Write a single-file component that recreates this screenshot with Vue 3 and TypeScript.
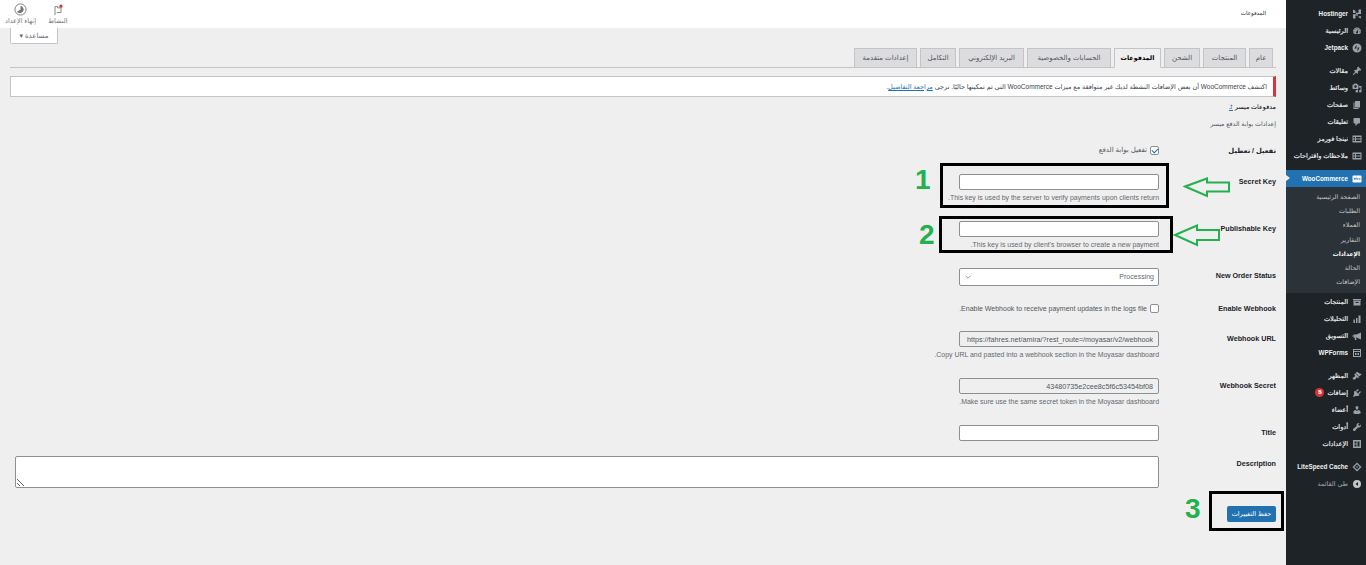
<script setup lang="ts">
interface MenuItem {
  label: string
  d: string
  gap?: boolean
  badge?: string
}

const icons: Record<string, string> = {
  hostinger: 'M2 1l5 2.5V8h-5zM13 1h5v9H8.5L7.5 7.5H13zM2 10.5h9.5l1 2.5H7v6H2zM13 14.5h5V19l-5-2.5z',
  home: 'M3.76 16h12.48c1.1-1.37 1.76-3.11 1.76-5 0-4.42-3.58-8-8-8s-8 3.58-8 8c0 1.89.66 3.63 1.76 5zM10 4c.55 0 1 .45 1 1s-.45 1-1 1-1-.45-1-1 .45-1 1-1zM6 6c.55 0 1 .45 1 1s-.45 1-1 1-1-.45-1-1 .45-1 1-1zm8 0c.55 0 1 .45 1 1s-.45 1-1 1-1-.45-1-1 .45-1 1-1zm-5.37 5.55L12 7v6c0 1.1-.9 2-2 2s-2-.9-2-2c0-.57.24-1.08.63-1.45zM4 10c.55 0 1 .45 1 1s-.45 1-1 1-1-.45-1-1 .45-1 1-1zm12 0c.55 0 1 .45 1 1s-.45 1-1 1-1-.45-1-1 .45-1 1-1zm-12 3c.55 0 1 .45 1 1s-.45 1-1 1-1-.45-1-1 .45-1 1-1zm12 0c.55 0 1 .45 1 1s-.45 1-1 1-1-.45-1-1 .45-1 1-1z',
  jetpack: 'M10 1a9 9 0 1 0 0 18 9 9 0 0 0 0-18zM9 11H5l4-8zm2-2h4l-4 8z',
  post: 'M10.44 3.02l1.82-1.82 6.36 6.35-1.83 1.82c-1.05-.68-2.48-.57-3.41.36l-.75.75c-.92.93-1.04 2.35-.35 3.41l-1.83 1.82-2.41-2.41-2.8 2.79c-.42.42-3.38 2.71-3.8 2.29s1.86-3.39 2.28-3.81l2.79-2.79L4.1 9.36l1.83-1.82c1.05.69 2.48.57 3.4-.36l.75-.75c.93-.92 1.05-2.35.36-3.41z',
  media: 'M13 11V4c0-.55-.45-1-1-1h-1.67L9 1H5L3.67 3H2c-.55 0-1 .45-1 1v7c0 .55.45 1 1 1h10c.55 0 1-.45 1-1zM7 4.5c1.38 0 2.5 1.12 2.5 2.5S8.38 9.5 7 9.5 4.5 8.38 4.5 7 5.62 4.5 7 4.5zM14 6h5v10.5c0 1.38-1.12 2.5-2.5 2.5S14 17.88 14 16.5s1.12-2.5 2.5-2.5c.17 0 .34.02.5.05V9h-3V6zm-4 8.05V13h2v3.5c0 1.38-1.12 2.5-2.5 2.5S7 17.88 7 16.5 8.12 14 9.5 14c.17 0 .34.02.5.05z',
  page: 'M6 15V2h10v13H6zm-1 1h8v2H3V5h2v11z',
  comment: 'M5 2h9c1.1 0 2 .9 2 2v7c0 1.1-.9 2-2 2h-2l-5 5v-5H5c-1.1 0-2-.9-2-2V4c0-1.1.9-2 2-2z',
  form: 'M1 3h18v14H1zM3 6v3h3V6zm5 0v3h9V6zm-5 5v3h3v-3zm5 0v3h9v-3z',
  product: 'M2 4h16v3H2zM3 8h14v9H3zm4 2v2h6v-2z',
  chart: 'M3 11h3v7H3zM8 8h3v10H8zM13 3h4v15h-4z',
  megaphone: 'M18 3l-9 4H3v6h2l1 5h3l-1-5h1l9 4zM1 8.5h1v3H1z',
  wpforms: 'M2 2h16v16H2zM4 4v2h12V4zm0 4v8h12V8zm2 2h3v4H6zm5 0h3v4h-3z',
  brush: 'M14.48 11.06L7.41 3.99l1.5-1.5c.5-.56 2.3-.47 3.51.32 1.21.8 1.43 1.28 2.91 2.1 1.18.64 2.45 1.26 4.45.85zm-.71.71L6.7 4.7 4.93 6.47c-.39.39-.39 1.02 0 1.41l1.06 1.06c.39.39.39 1.03 0 1.42-.6.6-1.43 1.11-2.21 1.69-.35.26-.7.53-1.01.84C1.43 13.23.78 15.12 2.17 16.5c.69.69 1.69.92 2.7.71.73-.16 1.37-.53 1.79-.94.31-.31.58-.66.84-1.01.58-.78 1.09-1.61 1.69-2.21.39-.39 1.03-.39 1.42 0l1.06 1.06c.39.39 1.02.39 1.41 0z',
  plugin: 'M13.11 4.36L9.87 7.6 8 5.73l3.24-3.24c.35-.34 1.05-.2 1.56.32.52.51.66 1.21.31 1.55zm-8 1.77l.91-1.12 9.01 9.01-1.19.84c-.71.71-2.63 1.16-3.82 1.16H6.14L4.9 17.26c-.59.59-1.54.59-2.12 0-.59-.58-.59-1.53 0-2.12l1.24-1.24v-3.88c0-1.13.4-3.19 1.09-3.89zm7.26 3.97l3.24-3.24c.34-.35 1.04-.21 1.55.31.52.51.66 1.21.31 1.55l-3.24 3.25z',
  users: 'M10 9.25c-2.27 0-2.73-3.44-2.73-3.44C7 4.02 7.82 2 9.97 2c2.16 0 2.98 2.02 2.71 3.81 0 0-.41 3.44-2.68 3.44zm0 2.57L12.72 10c2.39 0 4.52 2.33 4.52 4.53v2.49s-3.65 1.13-7.24 1.13c-3.65 0-7.24-1.13-7.24-1.13v-2.49c0-2.25 1.94-4.48 4.47-4.48z',
  tools: 'M16.68 9.77c-1.34 1.34-3.3 1.67-4.95.99l-5.41 6.52c-.99.99-2.59.99-3.58 0s-.99-2.59 0-3.57l6.52-5.42c-.68-1.65-.35-3.61.99-4.95 1.28-1.28 3.12-1.62 4.72-1.06l-2.89 2.89 2.82 2.82 2.86-2.87c.53 1.58.18 3.39-1.08 4.65z',
  settings: 'M2 2h16v16H2zM5 5v4h4V5zm6 0v10h4V5zM5 11v4h4v-4z',
  litespeed: 'M10 1l9 9-9 9-9-9zM10 4.5L4.5 10l5.5 5.5 5.5-5.5z M8 9h4v2H8z',
  collapse: 'M10 2a8 8 0 1 0 0 16 8 8 0 0 0 0-16zm2 4v8l-5-4z',
}

const topItems: MenuItem[] = [
  { label: 'Hostinger', d: icons.hostinger },
  { label: 'الرئيسية', d: icons.home },
  { label: 'Jetpack', d: icons.jetpack },
  { label: 'مقالات', d: icons.post, gap: true },
  { label: 'وسائط', d: icons.media },
  { label: 'صفحات', d: icons.page },
  { label: 'تعليقات', d: icons.comment },
  { label: 'نينجا فورمز', d: icons.form },
  { label: 'ملاحظات واقتراحات', d: icons.form },
]

const subItems: { label: string; current?: boolean }[] = [
  { label: 'الصفحة الرئيسية' },
  { label: 'الطلبات' },
  { label: 'العملاء' },
  { label: 'التقارير' },
  { label: 'الإعدادات', current: true },
  { label: 'الحالة' },
  { label: 'الإضافات' },
]

const bottomItems: MenuItem[] = [
  { label: 'المنتجات', d: icons.product },
  { label: 'التحليلات', d: icons.chart },
  { label: 'التسويق', d: icons.megaphone },
  { label: 'WPForms', d: icons.wpforms },
  { label: 'المظهر', d: icons.brush, gap: true },
  { label: 'إضافات', d: icons.plugin, badge: '5' },
  { label: 'أعضاء', d: icons.users },
  { label: 'أدوات', d: icons.tools },
  { label: 'الإعدادات', d: icons.settings },
  { label: 'LiteSpeed Cache', d: icons.litespeed, gap: true },
]

const isLatin = (text: string): boolean => /[a-z]/i.test(text)

const tabs: { label: string; width: number; active?: boolean }[] = [
  { label: 'عام', width: 24 },
  { label: 'المنتجات', width: 43 },
  { label: 'الشحن', width: 36 },
  { label: 'المدفوعات', width: 47, active: true },
  { label: 'الحسابات والخصوصية', width: 84 },
  { label: 'البريد الإلكتروني', width: 65 },
  { label: 'التكامل', width: 36 },
  { label: 'إعدادات متقدمة', width: 63 },
]
</script>

<template>
  <div class="page">
    <aside class="sidebar">
      <a v-for="item in topItems" :key="item.label" class="item" :class="{ gap: item.gap, latin: isLatin(item.label) }">
        <svg class="icon" viewBox="0 0 20 20"><path :d="item.d" fill-rule="evenodd" /></svg>
        <span>{{ item.label }}</span>
      </a>
      <a class="item woo latin">
        <svg class="icon" viewBox="0 0 20 20">
          <rect x="1" y="3" width="18" height="14" rx="2" fill="#fff" />
          <path d="M4 7l1 4 1.5-3 1.5 3 1-4M11.5 9a1 1 0 1 0 .01 0M15.5 9a1 1 0 1 0 .01 0" fill="none" stroke="#2271b1" stroke-width="1.4" />
        </svg>
        <span>WooCommerce</span>
      </a>
      <div class="submenu">
        <a v-for="sub in subItems" :key="sub.label" class="sub" :class="{ current: sub.current }">{{ sub.label }}</a>
      </div>
      <a v-for="item in bottomItems" :key="item.label" class="item" :class="{ gap: item.gap, latin: isLatin(item.label) }">
        <svg class="icon" viewBox="0 0 20 20"><path :d="item.d" fill-rule="evenodd" /></svg>
        <span>{{ item.label }}</span>
        <b v-if="item.badge" class="badge">{{ item.badge }}</b>
      </a>
      <a class="item collapse">
        <svg class="icon" viewBox="0 0 20 20"><path :d="icons.collapse" fill-rule="evenodd" /></svg>
        <span>طي القائمة</span>
      </a>
    </aside>

    <main class="main">
      <header class="topbar">
        <h1 class="page-title">المدفوعات</h1>
        <div class="actions">
          <div class="action">
            <svg class="flag" viewBox="0 0 14 14">
              <path d="M3.5 13V3h3v1.5h4V10H5.5" fill="none" stroke="#757575" stroke-width="1" />
              <circle cx="10.5" cy="2.5" r="1.8" fill="#d63638" />
            </svg>
            <span>النشاط</span>
          </div>
          <div class="action">
            <svg class="progress" viewBox="0 0 14 14">
              <circle cx="7" cy="7" r="6" fill="none" stroke="#757575" stroke-width="1" />
              <path d="M7 3A4 4 0 1 1 3.2 9.4L7 7z" fill="#757575" />
            </svg>
            <span>إنهاء الإعداد</span>
          </div>
        </div>
      </header>

      <div class="content">
        <div class="help-row"><button class="help">مساعدة ▾</button></div>

        <nav class="tabs">
          <a
            v-for="tab in tabs"
            :key="tab.label"
            class="tab"
            :class="{ active: tab.active }"
            :style="{ width: tab.width + 'px' }"
          >{{ tab.label }}</a>
        </nav>

        <div class="notice">
          اكتشف WooCommerce أن بعض الإضافات النشطة لديك غير متوافقة مع ميزات WooCommerce التي تم تمكينها حاليًا. نرجى
          <a href="#">مراجعة التفاصيل</a>.
        </div>

        <h2 class="gateway">مدفوعات ميسر <a href="#">⮥</a></h2>
        <p class="gateway-desc">إعدادات بوابة الدفع ميسر</p>

        <form class="form" @submit.prevent>
          <label class="lbl ar">تفعيل / تعطيل</label>
          <div class="field row-first">
            <label class="check"><input type="checkbox" checked /> تفعيل بوابة الدفع</label>
          </div>

          <label class="lbl">Secret Key</label>
          <div class="field">
            <input class="input" type="text" />
            <p class="desc">This key is used by the server to verify payments upon clients return.</p>
          </div>

          <label class="lbl">Publishable Key</label>
          <div class="field">
            <input class="input" type="text" />
            <p class="desc">This key is used by client's browser to create a new payment.</p>
          </div>

          <label class="lbl">New Order Status</label>
          <div class="field">
            <div class="select">
              <span>Processing</span>
              <svg viewBox="0 0 10 6"><path d="M1 1l4 4 4-4" fill="none" stroke="#50575e" stroke-width="1" /></svg>
            </div>
          </div>

          <label class="lbl">Enable Webhook</label>
          <div class="field row-check">
            <label class="check"><input type="checkbox" /> Enable Webhook to receive payment updates in the logs file.</label>
          </div>

          <label class="lbl">Webhook URL</label>
          <div class="field">
            <input class="input filled" type="text" readonly value="https://fahres.net/amira/?rest_route=/moyasar/v2/webhook" />
            <p class="desc">Copy URL and pasted into a webhook section in the Moyasar dashboard.</p>
          </div>

          <label class="lbl">Webhook Secret</label>
          <div class="field">
            <input class="input filled" type="text" readonly value="43480735e2cee8c5f6c53454bf08" />
            <p class="desc">Make sure use the same secret token in the Moyasar dashboard.</p>
          </div>

          <label class="lbl">Title</label>
          <div class="field"><input class="input" type="text" /></div>

          <label class="lbl">Description</label>
          <div class="field"><textarea class="area"></textarea></div>
        </form>

        <button class="save">حفظ التغييرات</button>
      </div>

      <div class="box box1"></div>
      <div class="box box2"></div>
      <div class="box box3"></div>
      <span class="num num1">1</span>
      <span class="num num2">2</span>
      <span class="num num3">3</span>
      <svg class="arrow arrow1" viewBox="0 0 48 22">
        <path d="M2 9.5L24 1.5V5.5H46V14.5H24V19z" fill="none" stroke="#22b14c" stroke-width="2" />
      </svg>
      <svg class="arrow arrow2" viewBox="0 0 48 24">
        <path d="M2 11L24 1.5V6H46V16H24V21z" fill="none" stroke="#22b14c" stroke-width="2" />
      </svg>
    </main>
  </div>
</template>

<style>
html, body { margin: 0; background: #efefef; }
</style>

<style scoped>
.page {
  display: flex;
  direction: rtl;
  width: 1366px;
  height: 565px;
  overflow: hidden;
  background: #efefef;
  font-family: "Liberation Sans", "DejaVu Sans", sans-serif;
  font-size: 7px;
  color: #3c434a;
}
.sidebar {
  flex: 0 0 80px;
  width: 80px;
  min-width: 0;
  box-sizing: border-box;
  padding-top: 5px;
  background: #1d2327;
  color: #f0f0f1;
}
.item {
  display: flex;
  align-items: center;
  height: 17px;
  padding-right: 4px;
  font-size: 6.5px;
  white-space: nowrap;
  position: relative;
  -webkit-text-stroke: 0.15px currentColor;
}
.item.latin { font-size: 6.3px; font-weight: 700; -webkit-text-stroke: 0; }
.item.gap { margin-top: 6px; }
.icon {
  flex: 0 0 10px;
  width: 10px;
  height: 10px;
  margin-left: 4px;
  fill: #9ca1a7;
}
.woo {
  margin-top: 6px;
  background: #2271b1;
  color: #fff;
}
.woo::after {
  content: "";
  position: absolute;
  left: 0;
  top: 5px;
  border-style: solid;
  border-width: 3px 0 3px 4px;
  border-color: transparent transparent transparent #efefef;
}
.submenu {
  background: #2c3338;
  padding: 3px 0 4px;
  height: 99px;
}
.sub {
  display: block;
  height: 14.2px;
  line-height: 14.2px;
  padding-right: 6px;
  font-size: 6.4px;
  color: #c3c4c7;
}
.sub.current { color: #fff; font-weight: 700; font-size: 6px; }
.badge {
  margin-right: 3px;
  width: 9px;
  height: 9px;
  line-height: 9px;
  border-radius: 50%;
  background: #d63638;
  color: #fff;
  font-size: 6px;
  text-align: center;
}
.collapse { color: #a7aaad; -webkit-text-stroke: 0; }
.collapse .icon { fill: #c3c4c7; }

.main {
  flex: 1;
  position: relative;
  min-width: 0;
}
.topbar {
  display: flex;
  justify-content: space-between;
  align-items: flex-start;
  height: 28px;
  background: #fff;
  padding: 0 20px 0 5px;
}
.page-title {
  margin: 9px 0 0;
  font-size: 5.6px;
  line-height: 8px;
  font-weight: 400;
  color: #1d2327;
}
.actions { display: flex; gap: 12px; padding-top: 3px; }
.action {
  display: flex;
  flex-direction: column;
  align-items: center;
  font-size: 6.5px;
  color: #757575;
  gap: 1px;
}
.flag { width: 12px; height: 12px; margin-top: 1px; }
.progress { width: 13px; height: 13px; }

.content { padding: 0 10px; }
.help-row {
  height: 20px;
  display: flex;
  justify-content: flex-end;
}
.help {
  width: 48px;
  height: 16px;
  padding: 0;
  border: 1px solid #c3c4c7;
  border-top: 0;
  background: #fff;
  border-radius: 0 0 2px 2px;
  font: inherit;
  font-size: 7px;
  color: #646970;
}
.tabs {
  display: flex;
  height: 19px;
  gap: 3px;
  padding-right: 3px;
  border-bottom: 1px solid #c3c4c7;
}
.tab {
  box-sizing: border-box;
  flex: none;
  height: 20px;
  line-height: 18px;
  text-align: center;
  border: 1px solid #c3c4c7;
  background: #dcdcde;
  font-size: 7px;
  color: #50575e;
  white-space: nowrap;
  overflow: hidden;
}
.tab.active {
  background: #efefef;
  border-bottom-color: #efefef;
  font-size: 6.4px;
  font-weight: 700;
  color: #000;
}
.notice {
  box-sizing: border-box;
  height: 21px;
  margin-top: 8px;
  padding: 0 6px 0 7px;
  line-height: 19px;
  background: #fff;
  border: 1px solid #c3c4c7;
  border-right: 3px solid #d63638;
  font-size: 6.5px;
  color: #3c434a;
  white-space: nowrap;
}
.notice a { color: #2271b1; }
.gateway {
  margin: 3px 0 0;
  height: 14px;
  line-height: 14px;
  font-size: 6.4px;
  font-weight: 400;
  color: #000;
}
.gateway a { color: #2271b1; text-decoration: underline; }
.gateway-desc {
  margin: 3px 0 0;
  height: 14px;
  line-height: 14px;
  font-size: 6.3px;
  color: #50575e;
}
.form {
  display: grid;
  grid-template-columns: 117px 1fr;
  row-gap: 15px;
  margin-top: 13px;
}
.lbl {
  line-height: 15px;
  font-size: 7.2px;
  font-weight: 700;
  color: #1d2327;
}
.lbl.ar { font-size: 6.8px; line-height: 14px; }
.row-first { padding-bottom: 3px; min-height: 12px; }
.row-check { min-height: 15px; }
.field { min-width: 0; }
.check {
  display: flex;
  align-items: center;
  gap: 3px;
  height: 12px;
  font-size: 7px;
  color: #50575e;
}
.row-check .check { height: 14px; }
.check input {
  appearance: none;
  box-sizing: border-box;
  width: 9px;
  height: 9px;
  margin: 0;
  background: #fff;
  border: 1px solid #8c8f94;
  border-radius: 2px;
  position: relative;
}
.check input:checked::before {
  content: "";
  position: absolute;
  left: 1.5px;
  top: 0;
  width: 3px;
  height: 5px;
  border: solid #2271b1;
  border-width: 0 1px 1px 0;
  transform: rotate(45deg);
}
.input {
  display: block;
  box-sizing: border-box;
  width: 200px;
  height: 16px;
  padding: 0 5px;
  background: #fff;
  border: 1px solid #8c8f94;
  border-radius: 2px;
  font: inherit;
  font-size: 7.2px;
  color: #50575e;
  outline: none;
}
.input.filled { background: #efefef; }
.desc {
  margin: 0;
  height: 16px;
  line-height: 15px;
  font-size: 6.95px;
  color: #646970;
  white-space: nowrap;
}
.select {
  position: relative;
  box-sizing: border-box;
  width: 200px;
  height: 18px;
  padding: 0 4px;
  line-height: 16px;
  background: #fff;
  border: 1px solid #8c8f94;
  border-radius: 2px;
  font-size: 7px;
  color: #646970;
}
.select svg {
  position: absolute;
  left: 5px;
  top: 6px;
  width: 6px;
  height: 4px;
}
.area {
  display: block;
  box-sizing: border-box;
  width: 1144px;
  height: 32px;
  padding: 2px;
  margin: 0;
  background: #fff;
  border: 1px solid #8c8f94;
  border-radius: 2px;
  outline: none;
}
.save {
  display: block;
  width: 49px;
  height: 16px;
  margin: 18px 0 0;
  padding: 0;
  background: #2271b1;
  border: 0;
  border-radius: 2px;
  font: inherit;
  font-size: 6.5px;
  color: #fff;
}
.box {
  position: absolute;
  box-sizing: border-box;
  border: 3px solid #000;
}
.box1 { left: 940px; top: 163px; width: 229px; height: 45px; }
.box2 { left: 939px; top: 216px; width: 234px; height: 37px; }
.box3 { left: 1209px; top: 491px; width: 75px; height: 40px; }
.num {
  position: absolute;
  font-size: 28px;
  line-height: 28px;
  font-weight: 700;
  color: #22b14c;
}
.num1 { left: 915px; top: 166px; }
.num2 { left: 919px; top: 221px; }
.num3 { left: 1185px; top: 495px; }
.arrow { position: absolute; }
.arrow1 { left: 1183px; top: 177px; width: 48px; height: 22px; }
.arrow2 { left: 1173px; top: 224px; width: 48px; height: 24px; }
</style>
